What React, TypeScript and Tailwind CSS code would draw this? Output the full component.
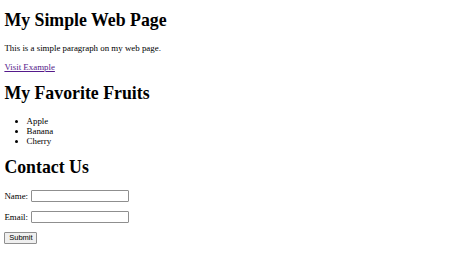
export default function App() {
  return (
    <div
      className="bg-white text-black text-[8.9px] leading-[normal] px-[4.4px] py-[0.1px]"
      style={{ fontFamily: '"Liberation Serif", serif' }}
    >
      <h1 className="text-[2em] font-bold mt-[0.55em] mb-[0.67em] leading-[normal]">My Simple Web Page</h1>
      <p className="my-[1em]">This is a simple paragraph on my web page.</p>
      <p className="my-[1em]">
        <a href="#" className="text-[#551a8b] underline">
          Visit Example
        </a>
      </p>

      <h2 className="text-[2em] font-bold my-[0.65em] leading-[normal]">My Favorite Fruits</h2>
      <ul className="list-disc pl-[22.2px] my-[1em]">
        <li>Apple</li>
        <li>Banana</li>
        <li>Cherry</li>
      </ul>

      <h2 className="text-[2em] font-bold my-[0.65em] leading-[normal]">Contact Us</h2>
      <form>
        <p className="my-[1em] flex items-center">
          <label>Name:</label>
          <input
            type="text"
            className="ml-[2.5px] w-[98px] h-[12px] border border-[#8f8f8f] rounded-[1px] bg-white"
          />
        </p>
        <p className="my-[1em] flex items-center">
          <label>Email:</label>
          <input
            type="email"
            className="ml-[2.5px] w-[98px] h-[12px] border border-[#8f8f8f] rounded-[1px] bg-white"
          />
        </p>
        <button
          type="button"
          className="h-[12px] w-[33px] text-[7.5px] leading-none border border-[#8f8f8f] rounded-[1px] bg-[#efefef]"
          style={{ fontFamily: '"Liberation Sans", Arial, sans-serif' }}
        >
          Submit
        </button>
      </form>
    </div>
  );
}
